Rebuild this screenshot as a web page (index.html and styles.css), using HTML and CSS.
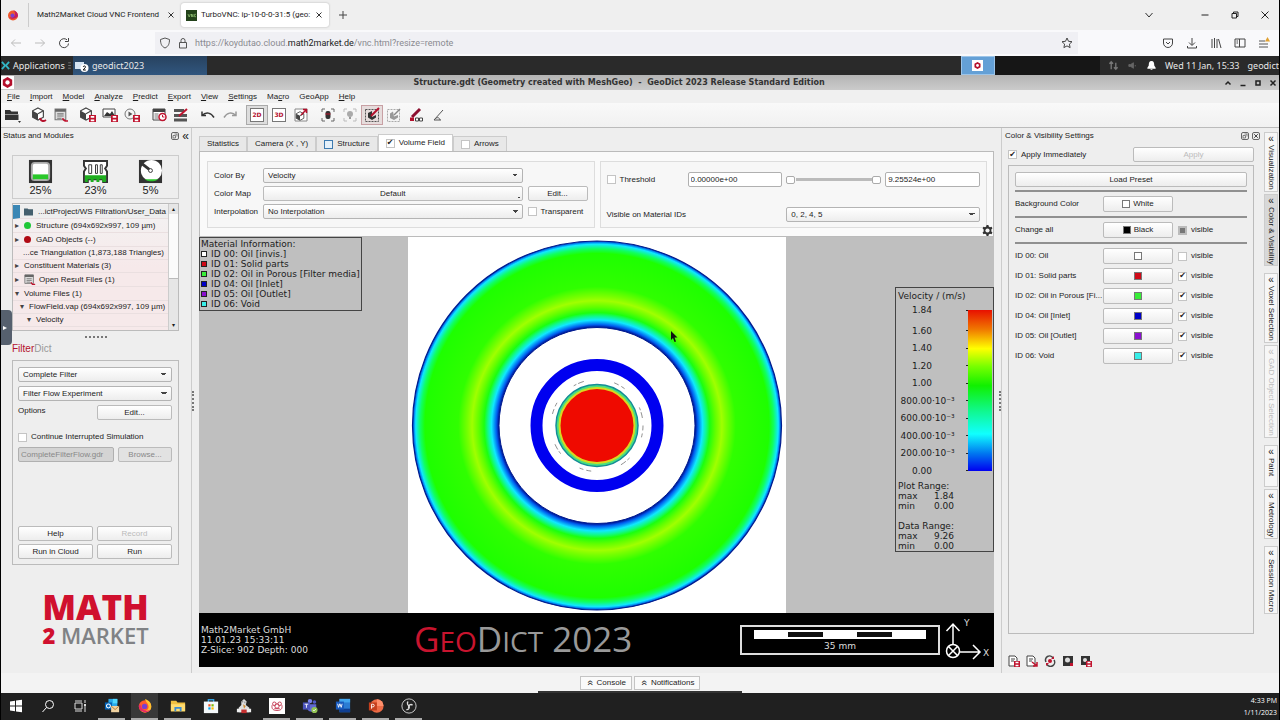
FILE: index.html
```
<!DOCTYPE html>
<html lang="en">
  <head>
    <meta charset="UTF-8" />
    <title>TurboVNC: geodict2023</title>
    <link rel="stylesheet" href="styles.css">
  </head>
  <body>
    <!-- shared icons -->
    <svg class="sprite" aria-hidden="true">
      <symbol id="gear" viewBox="0 0 12 12">
        <path d="M5 0h2l.4 1.7 1.3.7 1.7-.6 1 1.8L10.200 5v2l1.200 1.300-1 1.800-1.700-.5-1.300.7L7 12H5l-.4-1.700-1.300-.7-1.700.5-1-1.800L1.800 7V5L.6 3.600l1-1.800 1.700.6 1.300-.7z" fill="#333" />
        <circle cx="6" cy="6" r="2.300" fill="#f4f4f4" />
      </symbol>
      <symbol id="geo" viewBox="0 0 12 12">
        <path d="M6 0l5.200 3v6L6 12 .8 9V3z" fill="#b4102c" />
        <circle cx="6" cy="6" r="2.400" fill="#fff" />
      </symbol>
      <symbol id="cube" viewBox="0 0 12 12">
        <path d="M6 .8l4.600 2.500v5.400L6 11.200 1.400 8.700V3.300z" fill="#fff" stroke="#444" />
        <path d="M1.400 3.300L6 5.800v5.400L1.400 8.700z" fill="#444" />
        <path d="M6 5.800l4.600-2.500" stroke="#444" />
      </symbol>
      <symbol id="save" viewBox="0 0 8 8">
        <path d="M0 0h8v8H0z" fill="#c0142f" />
        <path d="M2 1h4v2H2zM2 5h4v2H2z" fill="#fff" />
      </symbol>
      <symbol id="undock" viewBox="0 0 8 8">
        <rect x=".5" y=".5" width="7" height="7" rx="1.500" fill="none" stroke="#666" />
        <path d="M2 6V3.500h2.500V6zM3.500 2H6v2.500" fill="none" stroke="#666" stroke-width=".8" />
      </symbol>
      <symbol id="close" viewBox="0 0 8 8">
        <rect x=".5" y=".5" width="7" height="7" rx="1.500" fill="none" stroke="#666" />
        <path d="M2.200 2.200l3.600 3.600M5.800 2.200L2.200 5.800" stroke="#444" />
      </symbol>
      <symbol id="result" viewBox="0 0 14 14">
        <path d="M1 1h10v10H1z" fill="#ddd" stroke="#777" />
        <path d="M1 1h10v2.500H1z" fill="#666" />
        <path d="M3 5.500h6M3 7.500h6M3 9.500h4" stroke="#777" />
        <path d="M8 9.500c1 2.500 2.500 3 5 2.500" fill="none" stroke="#c0142f" stroke-width="1.500" />
      </symbol>
    </svg>

    <header class="browser">
      <div class="tab-strip">
        <svg class="fox" viewBox="0 0 12 12"><circle cx="6" cy="6.500" r="5" fill="#f0582c" /><path d="M6 1c3 1 5 3 5 6-2 3-7 4-9 1 3 1 6 0 6-3S7 2 6 1z" fill="#c31c62" /><circle cx="5.500" cy="6.500" r="2" fill="#7a3fd0" /></svg>
        <div class="browser-tab">
          <span>Math2Market Cloud VNC Frontend</span>
          <button aria-label="Close tab"><svg viewBox="0 0 8 8"><path d="M1.500 1.500l5 5M6.500 1.500l-5 5" stroke="#333" /></svg></button>
        </div>
        <div class="browser-tab current">
          <svg viewBox="0 0 11 11"><path d="M0 0h11v11H0z" fill="#23421a" /><path d="M2 4l1.200 3L4.400 4M5.500 7V4l1.500 3V4M10 4.300H8.600v2.400H10" fill="none" stroke="#9acb7a" stroke-width=".7" /></svg>
          <span>TurboVNC: ip-10-0-0-31:5 (geo:</span>
          <button aria-label="Close tab"><svg viewBox="0 0 8 8"><path d="M1.500 1.500l5 5M6.500 1.500l-5 5" stroke="#333" /></svg></button>
        </div>
        <button class="new-tab" aria-label="New tab"><svg viewBox="0 0 10 10"><path d="M5 1v8M1 5h8" stroke="#444" /></svg></button>
        <div class="window-buttons">
          <button aria-label="List tabs"><svg viewBox="0 0 10 10"><path d="M1.500 3l3.500 4 3.500-4" fill="none" stroke="#333" /></svg></button>
          <button aria-label="Minimize"><svg viewBox="0 0 10 10"><path d="M1.500 5h7" stroke="#222" /></svg></button>
          <button aria-label="Restore"><svg viewBox="0 0 10 10"><path d="M2 3.500h4.500V8H2zM3.500 3.500V2H8v4.500H6.500" fill="none" stroke="#222" /></svg></button>
          <button aria-label="Close"><svg viewBox="0 0 10 10"><path d="M1.500 1.500l7 7M8.500 1.500l-7 7" stroke="#222" /></svg></button>
        </div>
      </div>
      <div class="nav-bar">
        <div class="nav-buttons">
          <button aria-label="Back"><svg viewBox="0 0 12 12"><path d="M11 6H1.500M5 2.500L1.500 6 5 9.500" fill="none" stroke="#bbb" /></svg></button>
          <button aria-label="Forward"><svg viewBox="0 0 12 12"><path d="M1 6h9.500M7 2.500L10.500 6 7 9.500" fill="none" stroke="#bbb" /></svg></button>
          <button aria-label="Reload"><svg viewBox="0 0 12 12"><path d="M10.500 6.500A4.500 4.500 0 1 1 9 2.800M10.500 1v3.500H7" fill="none" stroke="#444" /></svg></button>
        </div>
        <div class="url-bar">
          <svg viewBox="0 0 12 12"><path d="M6 1l4.500 1.500c0 4-1 7-4.500 8.500C2.500 9.500 1.500 6.500 1.500 2.500z" fill="none" stroke="#555" /></svg>
          <svg viewBox="0 0 12 12"><path d="M2.500 5.500h7v5.500h-7zM4 5.500v-2a2 2 0 0 1 4 0v2" fill="none" stroke="#555" /></svg>
          <span class="url">https://koydutao.cloud.<b>math2market.de</b>/vnc.html?resize=remote</span>
          <svg viewBox="0 0 12 12"><path d="M6 1l1.500 3.300 3.500.4-2.600 2.400.7 3.500L6 8.900l-3.100 1.700.7-3.500L1 4.700l3.500-.4z" fill="none" stroke="#444" /></svg>
        </div>
        <div class="nav-tools">
          <button aria-label="Pocket"><svg viewBox="0 0 12 12"><path d="M1.500 2h9v4a4.500 4.500 0 0 1-9 0zM4 5l2 2 2-2" fill="none" stroke="#444" /></svg></button>
          <button aria-label="Downloads"><svg viewBox="0 0 12 12"><path d="M6 1v7M3 5.500L6 8.500l3-3M1.500 9v2h9V9" fill="none" stroke="#444" /></svg></button>
          <button aria-label="Library"><svg viewBox="0 0 12 12"><path d="M2 2v9M4.500 1v10M7 2v9M8.500 2l2.500 9" stroke="#444" /></svg></button>
          <button aria-label="Sidebar"><svg viewBox="0 0 12 12"><path d="M1 2h10v8H1zM5.500 2v8M2.500 4h1.500M2.500 6h1.500" fill="none" stroke="#444" /></svg></button>
          <button aria-label="Menu"><svg viewBox="0 0 12 12"><path d="M1 4h6M1 7h9M1 10h9" stroke="#555" /><path d="M9.500 0l2.500 4.500H7z" fill="#e0a030" /></svg></button>
        </div>
      </div>
    </header>

    <div class="desktop-panel">
      <button class="apps">
        <svg viewBox="0 0 10 10"><path d="M1 1l3.500 4L1 9M9 1L5.500 5 9 9" fill="none" stroke="#32b8c8" stroke-width="2" /></svg>
        Applications
        <svg class="dots" viewBox="0 0 4 10"><path d="M0 2h3M0 5h3M0 8h3" stroke="#777" /></svg>
      </button>
      <button class="task">
        <svg viewBox="0 0 14 14"><path d="M0 3h9v7H0z" fill="#d5e4f2" /><circle cx="9.500" cy="9" r="4" fill="#fff" /><path d="M8.200 8c.2-1.500 2.600-1.300 2.300.2L8.200 11h2.600" fill="none" stroke="#111" /></svg>
        geodict2023
      </button>
      <div class="workspaces"><span class="workspace"><svg viewBox="0 0 11 11"><path d="M0 0h11v11H0z" fill="#fff" /><use href="#geo" x="2" y="2" width="7" height="7" /></svg></span></div>
      <div class="tray">
        <svg viewBox="0 0 12 12"><path d="M3.500 10V2M1.500 4l2-2 2 2M8.500 3v7M6.500 8l2 2 2-2" fill="none" stroke="#777" stroke-width="1.500" /></svg>
        <svg viewBox="0 0 12 12"><path d="M2 5h2l3-2v6L4 7H2zM9 5.500v1.500" fill="#666" stroke="#666" /></svg>
        <svg viewBox="0 0 12 12"><path d="M6 1c2.500 0 3 2 3 5l1.500 2.500v1h-9v-1L3 6c0-3 .5-5 3-5zM5 10h2v1H5z" fill="#fff" /></svg>
        <span>Wed 11 Jan, 15:33</span>
        <span>geodict</span>
      </div>
    </div>

    <div class="app">
      <div class="title-bar">
        <svg viewBox="0 0 12 12"><path d="M0 0h12v12H0z" fill="#fff" /><use href="#geo" x="1" y="1" width="10" height="10" /></svg>
        <h1>Structure.gdt (Geometry created with MeshGeo)&nbsp; -&nbsp; GeoDict 2023 Release Standard Edition</h1>
        <div class="title-buttons">
          <svg viewBox="0 0 8 8"><path d="M1.500 5.500L4 3l2.500 2.500" fill="none" stroke="#222" stroke-width="1.500" /></svg>
          <svg viewBox="0 0 8 8"><path d="M1.500 6.500h5" stroke="#222" stroke-width="1.500" /></svg>
          <svg viewBox="0 0 8 8"><path d="M2 2h4v4H2z" fill="none" stroke="#222" stroke-width="1.500" /></svg>
          <svg viewBox="0 0 8 8"><path d="M1.500 1.500l5 5M6.500 1.500l-5 5" stroke="#222" stroke-width="1.500" /></svg>
        </div>
      </div>

      <nav class="menu-bar">
        <button><u>F</u>ile</button>
        <button><u>I</u>mport</button>
        <button><u>M</u>odel</button>
        <button><u>A</u>nalyze</button>
        <button><u>P</u>redict</button>
        <button><u>E</u>xport</button>
        <button><u>V</u>iew</button>
        <button><u>S</u>ettings</button>
        <button>Ma<u>c</u>ro</button>
        <button>GeoApp</button>
        <button><u>H</u>elp</button>
      </nav>

      <div class="toolbar">
        <div class="tools">
          <button aria-label="Open folder"><svg viewBox="0 0 18 16"><path d="M2 3h5l1.500 1.500H15V7H2z" fill="#333" /><path d="M2 7.500h13.500V13H2z" fill="#333" /><path d="M15 14h3l-1.500 2z" fill="#333" /></svg></button>
        </div>
        <div class="tools">
          <button aria-label="Load structure"><svg viewBox="0 0 18 16"><use href="#cube" x="1" y="0" width="14" height="14" /><path d="M10 11c1 3 3 4 6 2" fill="none" stroke="#b4102c" stroke-width="2" /></svg></button>
          <button aria-label="Load results"><svg viewBox="0 0 18 16"><use href="#result" x="2" y="1" width="15" height="15" /></svg></button>
        </div>
        <div class="tools">
          <button aria-label="Save structure"><svg viewBox="0 0 18 16"><use href="#cube" x="0" y="0" width="14" height="14" /><use href="#save" x="10" y="8" width="7" height="7" /></svg></button>
          <button aria-label="Save image"><svg viewBox="0 0 18 16"><path d="M2 2h12v8H2z" fill="#fff" stroke="#444" /><path d="M3 9l3-4 3 2 2-3 3 5z" fill="#333" /><use href="#save" x="10" y="8" width="7" height="7" /></svg></button>
          <button aria-label="Save video"><svg viewBox="0 0 18 16"><circle cx="7" cy="7" r="5" fill="none" stroke="#777" /><path d="M5.500 4.500v5l4-2.500z" fill="#555" /><use href="#save" x="10" y="8" width="7" height="7" /></svg></button>
        </div>
        <div class="tools">
          <button aria-label="Macro timer"><svg viewBox="0 0 18 16"><path d="M3 2h12v11H3z" fill="#fff" stroke="#444" /><path d="M3 2h12v3H3z" fill="#444" /><path d="M4.500 7h4M4.500 9h4M4.500 11h4" stroke="#777" /><circle cx="12.500" cy="10" r="3.500" fill="#fff" stroke="#c0142f" stroke-width="1.500" /><path d="M12.500 8v2h2" fill="none" stroke="#c0142f" /></svg></button>
          <button aria-label="Edit macro"><svg viewBox="0 0 18 16"><path d="M2 2h10v3H2zM2 7h13v3H2zM2 11.500h13v3H2z" fill="#555" /><path d="M7 9l8-7" stroke="#c0142f" stroke-width="2" /></svg></button>
        </div>
        <div class="tools">
          <button aria-label="Undo"><svg viewBox="0 0 18 16"><path d="M3 8.500c4-4 9-3 12 2M3 4.500v4h4" fill="none" stroke="#333" stroke-width="1.500" /></svg></button>
          <button aria-label="Redo"><svg viewBox="0 0 18 16"><path d="M15 8.500c-4-4-9-3-12 2M15 4.500v4h-4" fill="none" stroke="#999" stroke-width="1.500" /></svg></button>
        </div>
        <div class="tools">
          <button class="on mode"><span>2D</span></button>
          <button class="mode"><span>3D</span></button>
          <button aria-label="Resize view"><svg viewBox="0 0 18 16"><path d="M3 2h12v12H3z" fill="#fff" stroke="#888" /><use href="#cube" x="3" y="4" width="10" height="10" /><path d="M9 8l5-5M11 2.500h3.500V6" fill="none" stroke="#b4102c" stroke-width="1.500" /></svg></button>
        </div>
        <div class="tools">
          <button aria-label="Mouse mode"><svg viewBox="0 0 18 16"><path d="M3 5V2h3M12 2h3v3M15 11v3h-3M6 14H3v-3" fill="none" stroke="#666" /><rect x="6.500" y="4" width="5" height="8" rx="2" fill="#333" /><path d="M6.500 7h5" stroke="#c0142f" /></svg></button>
          <button aria-label="Light mode"><svg viewBox="0 0 18 16"><path d="M3 5V2h3M12 2h3v3M15 11v3h-3M6 14H3v-3" fill="none" stroke="#bbb" /><circle cx="9" cy="7" r="3" fill="#aaa" /><path d="M8 10h2v2H8z" fill="#999" /></svg></button>
          <button class="on rosy" aria-label="Draw selection"><svg viewBox="0 0 18 16"><path d="M2.500 2.500h13v12h-13z" fill="none" stroke="#555" stroke-dasharray="2 1" /><path d="M9 4l-4 2v4.500L9 13l4-2.500V8L9 10z" fill="#333" /><path d="M8 9l8-8" stroke="#b4102c" stroke-width="2" /></svg></button>
          <button aria-label="Draw selection off"><svg viewBox="0 0 18 16"><path d="M2.500 2.500h12v12h-12z" fill="none" stroke="#aaa" stroke-dasharray="2 1" /><path d="M8 4.500L5 6.500V11l4 2 4-2.500V8L9 9.500z" fill="#999" /><path d="M9 8l6-6" stroke="#888" stroke-width="1.500" /></svg></button>
          <button aria-label="Paint tool"><svg viewBox="0 0 18 16"><path d="M5 10l8-8" stroke="#8c1030" stroke-width="3" /><path d="M3 10.500h4V14H3z" fill="#b4102c" /><path d="M8.500 11h3v3h-3zM12.500 11h3v3h-3z" fill="#fff" stroke="#444" /></svg></button>
          <button aria-label="Measure angle"><svg viewBox="0 0 18 16"><path d="M5 13L14 3M5 13h7M6.500 11.500c2-1.500 4-1 4.500 1.500" fill="none" stroke="#555" /></svg></button>
        </div>
      </div>

      <main class="workspace-area">
        <aside class="left-dock">
          <button class="vnc-handle" aria-label="Open VNC bar"><svg viewBox="0 0 6 6"><path d="M1 1l4 2-4 2z" fill="#fff" /></svg></button>
          <div class="dock-header">
            <h2>Status and Modules</h2>
            <svg><use href="#undock" /></svg>
            <span class="collapse">«</span>
          </div>
          <div class="status">
            <div class="stat">
              <svg viewBox="0 0 26 26"><path d="M1 1h24v24H1z" fill="#333" /><rect x="4" y="4" width="18" height="18" rx="3" fill="#fff" stroke="#aaa" stroke-width="2" /><path d="M5 16h16v5H5z" fill="#2ac82a" /></svg>
              <span>25%</span>
            </div>
            <div class="stat">
              <svg viewBox="0 0 26 26"><path d="M1 2h24v5l-2 3 2 3v11h-4v-3H5v3H1V13l2-3-2-3z" fill="#fff" stroke="#333" stroke-width="2" /><path d="M2 17h22v7h-4v-3h-3v3h-3v-3h-3v3H8v-3H5v3H2z" fill="#1fae1f" /><path d="M6 6h3v9H6zM13 6h2v9h-2zM18 6h2v9h-2z" fill="#fff" stroke="#333" /></svg>
              <span>23%</span>
            </div>
            <div class="stat">
              <svg viewBox="0 0 26 26"><path d="M1 1h24v24H1z" fill="#333" /><circle cx="14" cy="12" r="11" fill="#fff" /><path d="M7 21c4 3 10 3 14 0z" fill="#2ac82a" /><path d="M3 4l9 7" stroke="#333" stroke-width="3" /><circle cx="13" cy="12" r="2" fill="#fff" stroke="#333" /></svg>
              <span>5%</span>
            </div>
          </div>
          <div class="tree">
            <ul>
              <li class="tall root"><svg viewBox="0 0 10 8"><path d="M0 0h4l1 1h5v7H0z" fill="#44606e" /></svg>...ictProject/WS Filtration/User_Data</li>
              <li class="tall closed"><i class="dot dot-green"></i>Structure (694x692x997, 109 µm)</li>
              <li class="tall closed"><i class="dot dot-red"></i>GAD Objects (--)</li>
              <li class="plain">...ce Triangulation (1,873,188 Triangles)</li>
              <li class="closed">Constituent Materials (3)</li>
              <li class="tall closed"><svg viewBox="0 0 14 14"><use href="#result" width="14" height="14" /></svg>Open Result Files (1)</li>
              <li class="tall open">Volume Files (1)</li>
              <li class="open level-1">FlowField.vap (694x692x997, 109 µm)</li>
              <li class="open level-2">Velocity</li>
            </ul>
            <div class="scrollbar"><span>▴</span><span class="thumb"></span><span>▾</span></div>
          </div>
          <div class="splitter"></div>

          <h2 class="module-name"><b>Filter</b>Dict</h2>
          <form class="module">
            <select aria-label="Filter type"><option>Complete Filter</option></select>
            <select aria-label="Experiment"><option>Filter Flow Experiment</option></select>
            <div class="pair">
              <span>Options</span>
              <button type="button">Edit...</button>
            </div>
            <label class="check"><input type="checkbox">Continue Interrupted Simulation</label>
            <div class="file">
              <input type="text" value="CompleteFilterFlow.gdr" aria-label="Result file" disabled>
              <button type="button" class="muted" disabled>Browse...</button>
            </div>
            <div class="pair actions">
              <button type="button">Help</button>
              <button type="button" disabled>Record</button>
              <button type="button">Run in Cloud</button>
              <button type="button">Run</button>
            </div>
          </form>
          <div class="logo">
            <strong>MATH</strong>
            <span><b>2</b> MARKET</span>
          </div>
        </aside>
        <div class="grip"></div>

        <section class="center">
          <div class="view-tabs">
            <button>Statistics</button>
            <button>Camera (X , Y)</button>
            <label><input type="checkbox" class="blue">Structure</label>
            <label class="current"><input type="checkbox" checked>Volume Field</label>
            <label><input type="checkbox">Arrows</label>
          </div>
          <div class="tab-page">
            <fieldset class="coloring">
              <label for="color-by">Color By</label>
              <select id="color-by"><option>Velocity</option></select>
              <span></span>
              <label for="color-map">Color Map</label>
              <button id="color-map" class="map-button">Default</button>
              <button>Edit...</button>
              <label for="interpolation">Interpolation</label>
              <select id="interpolation"><option>No Interpolation</option></select>
              <label class="check"><input type="checkbox">Transparent</label>
            </fieldset>
            <fieldset class="threshold">
              <label class="check"><input type="checkbox">Threshold</label>
              <input type="text" value="0.00000e+00" aria-label="Minimum">
              <div class="range">
                <input type="range" value="0" aria-label="Lower threshold">
                <input type="range" value="100" aria-label="Upper threshold">
              </div>
              <input type="text" value="9.25524e+00" aria-label="Maximum">
              <label for="material-ids" class="ids-label">Visible on Material IDs</label>
              <select id="material-ids"><option>0, 2, 4, 5</option></select>
            </fieldset>
            <button class="gear" aria-label="View settings"><svg><use href="#gear" /></svg></button>
          </div>

          <div class="viewer">
            <svg class="slice" viewBox="0 0 378 376">
              <defs>
                <radialGradient id="flow" gradientUnits="userSpaceOnUse" cx="189" cy="188.500" r="185">
                  <stop offset=".53" stop-color="#001090" />
                  <stop offset=".545" stop-color="#0060f0" />
                  <stop offset=".57" stop-color="#10e8ff" />
                  <stop offset=".59" stop-color="#10f890" />
                  <stop offset=".61" stop-color="#1cff10" />
                  <stop offset=".64" stop-color="#60ff00" />
                  <stop offset=".675" stop-color="#a0ff00" />
                  <stop offset=".7" stop-color="#78ff00" />
                  <stop offset=".75" stop-color="#30ff00" />
                  <stop offset=".93" stop-color="#1eff00" />
                  <stop offset=".955" stop-color="#10ff60" />
                  <stop offset=".98" stop-color="#10e8ff" />
                  <stop offset=".99" stop-color="#0080f0" />
                  <stop offset="1" stop-color="#001480" />
                </radialGradient>
              </defs>
              <rect width="378" height="376" fill="#fff" />
              <circle cx="189" cy="188.500" r="184.500" fill="url(#flow)" stroke="#001c90" stroke-width="1.200" />
              <circle cx="189" cy="188.500" r="98" fill="#fff" stroke="#001c90" />
              <circle cx="189" cy="188.500" r="60.500" fill="none" stroke="#0000f0" stroke-width="12" />
              <circle cx="189" cy="188.500" r="46" fill="none" stroke="#444" stroke-width=".6" stroke-dasharray="5 3 4 24 3 2 6 31" />
              <circle cx="189" cy="188.500" r="41" fill="#48e080" stroke="#148c98" stroke-width="1.500" />
              <circle cx="189" cy="188.500" r="37.500" fill="#ef0a00" stroke="#d8d820" stroke-width="2" />
              <path d="M263 94v9l2-2 1.500 4 1.500-.6-1.500-3.800h3z" fill="#111" />
            </svg>
            <div class="materials">
              <p>Material Information:</p>
              <ul>
                <li><i class="swatch white"></i>ID 00: Oil [invis.]</li>
                <li><i class="swatch red"></i>ID 01: Solid parts</li>
                <li><i class="swatch green"></i>ID 02: Oil in Porous [Filter media]</li>
                <li><i class="swatch blue"></i>ID 04: Oil [Inlet]</li>
                <li><i class="swatch purple"></i>ID 05: Oil [Outlet]</li>
                <li><i class="swatch cyan"></i>ID 06: Void</li>
              </ul>
            </div>
            <div class="velocity">
              <p>Velocity / (m/s)</p>
              <div class="scale">
                <ul>
                  <li><span>1.84</span></li>
                  <li><span>1.60</span></li>
                  <li><span>1.40</span></li>
                  <li><span>1.20</span></li>
                  <li><span>1.00</span></li>
                  <li><span>800.00</span>·10⁻³</li>
                  <li><span>600.00</span>·10⁻³</li>
                  <li><span>400.00</span>·10⁻³</li>
                  <li><span>200.00</span>·10⁻³</li>
                  <li><span>0.00</span></li>
                </ul>
                <div class="color-bar"></div>
              </div>
              <dl>
                <dt>Plot Range:</dt>
                <dd><span>max</span><span>1.84</span></dd>
                <dd><span>min</span><span>0.00</span></dd>
              </dl>
              <dl>
                <dt>Data Range:</dt>
                <dd><span>max</span><span>9.26</span></dd>
                <dd><span>min</span><span>0.00</span></dd>
              </dl>
            </div>
          </div>

          <div class="viewer-footer">
            <p>Math2Market GmbH<br>11.01.23 15:33:11<br>Z-Slice: 902 Depth: 000</p>
            <div class="brand"><b>G<small>EO</small></b>D<small>ICT</small> 2023</div>
            <div class="ruler">
              <div class="ruler-bar"><i></i><i></i><i></i><i></i><i></i></div>
              35 mm
            </div>
            <svg class="axes" viewBox="0 0 48 46">
              <g fill="none" stroke="#fff" stroke-width="1.500">
                <circle cx="9" cy="34" r="6.500" />
                <path d="M4.500 29.500l9 9M13.500 29.500l-9 9M9 27V7M2.500 14L9 7l6.500 7M16 35h20M29 28l7 7-7 7" />
              </g>
              <text x="20" y="9">Y</text>
              <text x="39" y="39">X</text>
            </svg>
          </div>
        </section>
        <div class="grip grip-right"></div>

        <aside class="right-dock">
          <div class="dock-header">
            <h2>Color &amp; Visibility Settings</h2>
            <svg><use href="#undock" /></svg>
            <svg><use href="#close" /></svg>
          </div>
          <div class="apply">
            <label class="check"><input type="checkbox" checked>Apply Immediately</label>
            <button disabled>Apply</button>
          </div>
          <div class="colors">
            <button class="preset">Load Preset</button>
            <div class="color-row ruled">
              <span>Background Color</span>
              <button><i class="swatch white"></i>White</button>
            </div>
            <div class="color-row ruled">
              <span>Change all</span>
              <button><i class="swatch black"></i>Black</button>
              <label class="check"><input type="checkbox" class="partial">visible</label>
            </div>
            <div class="materials-list">
              <div class="color-row"><span>ID 00: Oil</span><button aria-label="Color of ID 00"><i class="swatch white"></i></button><label class="check"><input type="checkbox">visible</label></div>
              <div class="color-row"><span>ID 01: Solid parts</span><button aria-label="Color of ID 01"><i class="swatch red"></i></button><label class="check"><input type="checkbox" checked>visible</label></div>
              <div class="color-row"><span>ID 02: Oil in Porous [Fi...</span><button aria-label="Color of ID 02"><i class="swatch green"></i></button><label class="check"><input type="checkbox" checked>visible</label></div>
              <div class="color-row"><span>ID 04: Oil [Inlet]</span><button aria-label="Color of ID 04"><i class="swatch blue"></i></button><label class="check"><input type="checkbox" checked>visible</label></div>
              <div class="color-row"><span>ID 05: Oil [Outlet]</span><button aria-label="Color of ID 05"><i class="swatch purple"></i></button><label class="check"><input type="checkbox" checked>visible</label></div>
              <div class="color-row"><span>ID 06: Void</span><button aria-label="Color of ID 06"><i class="swatch cyan"></i></button><label class="check"><input type="checkbox" checked>visible</label></div>
            </div>
          </div>
          <div class="dock-tools">
            <button aria-label="Save preset"><svg viewBox="0 0 12 12"><path d="M1 1h6l2 2v8H1z" fill="#fff" stroke="#444" /><path d="M3 4h4M3 6h3" stroke="#444" /><use href="#save" x="6" y="6" width="6" height="6" /></svg></button>
            <button aria-label="Load preset file"><svg viewBox="0 0 12 12"><path d="M1 1h6l2 2v8H1z" fill="#fff" stroke="#444" /><path d="M3 4h4M3 6h3" stroke="#444" /><path d="M6 7l5 4M11 7v4H7" fill="none" stroke="#c0142f" stroke-width="1.500" /></svg></button>
            <button aria-label="Reset"><svg viewBox="0 0 12 12"><path d="M2 7a4 4 0 0 1 7-4M10 5a4 4 0 0 1-7 4.500" fill="none" stroke="#444" stroke-width="1.500" /><circle cx="6" cy="6" r="2" fill="#c0142f" /><path d="M10 1v3H7zM2 11V8h3z" fill="#c0142f" /></svg></button>
            <button aria-label="Snapshot"><svg viewBox="0 0 12 12"><path d="M1 1h10v10H1z" fill="#333" /><circle cx="5.500" cy="5" r="2.500" fill="#ddd" /><path d="M8 8h3v3H8z" fill="#c0142f" /></svg></button>
            <button aria-label="Save snapshot"><svg viewBox="0 0 12 12"><path d="M1 1h9v9H1z" fill="#333" /><circle cx="5" cy="5" r="2" fill="#ddd" /><use href="#save" x="6" y="6" width="6" height="6" /></svg></button>
          </div>
        </aside>

        <nav class="side-tabs">
          <button><i>«</i>Visualization</button>
          <button class="current"><i>«</i>Color &amp; Visibility</button>
          <button class="apart"><i>«</i>Voxel Selection</button>
          <button disabled><i>«</i>GAD Object Selection</button>
          <button class="apart"><i>«</i>Paint</button>
          <button><i>«</i>Metrology</button>
          <button class="apart"><i>«</i>Session Macro</button>
        </nav>
      </main>

      <div class="bottom-bar">
        <button><i>«</i>Console</button>
        <button><i>«</i>Notifications</button>
        <div class="share-strip"></div>
      </div>
    </div>

    <footer class="taskbar">
      <button aria-label="Start"><svg viewBox="0 0 16 16"><path d="M2 3.500l5-.7v4.700H2zM8 2.600l6-.8v5.700H8zM2 8.500h5v4.700l-5-.7zM8 8.500h6v5.700l-6-.8z" fill="#fff" /></svg></button>
      <button aria-label="Search"><svg viewBox="0 0 16 16"><circle cx="9.500" cy="6.500" r="4" fill="none" stroke="#fff" /><path d="M6.500 9.500L2.500 14" stroke="#fff" /></svg></button>
      <button aria-label="Task view"><svg viewBox="0 0 16 16"><path d="M3 5h7v6H3zM3 3h7M3 13h7M13 2v3M13 8v6" fill="none" stroke="#ddd" /><path d="M12 6h2v2h-2z" fill="#ddd" /></svg></button>
      <button class="running" aria-label="Outlook"><svg viewBox="0 0 18 18"><path d="M5 1h10v11H5z" fill="#28a8ea" /><path d="M10 1h5v5h-5z" fill="#50d9ff" /><path d="M1 5h8v8H1z" fill="#0364b8" /><circle cx="5" cy="9" r="2.200" fill="none" stroke="#fff" stroke-width="1.200" /><path d="M8 9h9v7H8z" fill="#f0d2a0" /><path d="M8 9l4.500 4L17 9" fill="none" stroke="#b07a30" /></svg></button>
      <button class="running active" aria-label="Firefox"><svg viewBox="0 0 18 18"><circle cx="9" cy="9.500" r="7" fill="#ff5a2c" /><path d="M9 1c4 1 8 5 7 10-1 5-8 7-12 3 4 2 9 0 9-4s-3-5-4-9z" fill="#ffc22e" /><path d="M2 8c0 5 3 8 7 8 3 0 5-1 6-3-5 3-10 1-11-5z" fill="#e8286a" /><circle cx="8.500" cy="9.500" r="3" fill="#7a3fd0" /></svg></button>
      <button class="running" aria-label="File Explorer"><svg viewBox="0 0 18 18"><path d="M1 3h6l1.500 2H17v10H1z" fill="#f0c040" /><path d="M1 7h16v8H1z" fill="#ffdc70" /><path d="M5 10h8v5h-2v-3H7v3H5z" fill="#3c8cd0" /></svg></button>
      <button aria-label="Store"><svg viewBox="0 0 18 18"><path d="M6 5V2h6v3" fill="none" stroke="#32a0e0" stroke-width="1.500" /><path d="M1 4h16v13H1z" fill="#f4f8fa" /><path d="M6 7h2.500v2.500H6z" fill="#f25022" /><path d="M9.500 7H12v2.500H9.500z" fill="#7fba00" /><path d="M6 10.500h2.500V13H6z" fill="#00a4ef" /><path d="M9.500 10.500H12V13H9.500z" fill="#ffb900" /></svg></button>
      <button aria-label="Tools"><svg viewBox="0 0 18 18"><path d="M9 1l3 3-1 4 4 3v5H3v-5l3-3V4z" fill="#ddd" /><path d="M8 7l3 2-2 3z" fill="#d08a30" /><path d="M1 12h5v4H1zM12 12h5v4h-5z" fill="#eee" /><path d="M6 13h6v4H6z" fill="#c43030" /><path d="M7.500 3v2M10 4v2" stroke="#777" /></svg></button>
      <button class="running" aria-label="GeoDict"><svg viewBox="0 0 18 18"><path d="M0 0h18v18H0z" fill="#fff" /><g fill="none" stroke="#c0304a"><circle cx="6" cy="6.500" r="2" /><circle cx="12" cy="6.500" r="2" /><circle cx="9" cy="9" r="2.500" /><path d="M3.500 8c-1 5 2 6 5.500 6s6.500-1 5.500-6M6 12h6" /></g></svg></button>
      <button class="running" aria-label="Teams"><svg viewBox="0 0 18 18"><circle cx="9" cy="3.500" r="2.500" fill="#7b83eb" /><circle cx="14" cy="4.500" r="2" fill="#5059c9" /><path d="M6 7h10v5c0 4-9 5-10 0z" fill="#6068d0" /><path d="M1 5h8v8H1z" fill="#4b53bc" /><path d="M3 7h4M5 7v4" stroke="#fff" /><circle cx="14" cy="13.500" r="3.500" fill="#92c353" /><path d="M12.500 13.500l1 1 2-2" fill="none" stroke="#fff" /></svg></button>
      <button class="running" aria-label="Word"><svg viewBox="0 0 18 18"><path d="M5 1h12v15H5z" fill="#2b7cd3" /><path d="M5 1h12v4H5z" fill="#41a5ee" /><path d="M5 12h12v4H5z" fill="#103f91" /><path d="M1 4h9v9H1z" fill="#185abd" /><path d="M3 6.500l1 4 1.500-4 1.500 4 1-4" fill="none" stroke="#fff" /></svg></button>
      <button class="running" aria-label="PowerPoint"><svg viewBox="0 0 18 18"><circle cx="10" cy="9" r="7.500" fill="#ed6c47" /><path d="M10 1.500A7.500 7.500 0 0 1 17.500 9H10z" fill="#ff8f6b" /><path d="M1 5h9v9H1z" fill="#c43e1c" /><path d="M4 12V7h1.500a1.500 1.500 0 0 1 0 3H4" fill="none" stroke="#fff" /></svg></button>
      <button class="running" aria-label="OBS"><svg viewBox="0 0 18 18"><circle cx="9" cy="9" r="8" fill="#222" stroke="#ddd" /><path d="M8 4c-2 2 0 5 2 5M13 8c-2-1.500-5 0-4.500 3M6 13c2.500.5 4-2 3-4" fill="none" stroke="#ddd" stroke-width="1.500" /></svg></button>
      <div class="clock">4:33 PM<br>1/11/2023</div>
    </footer>
  </body>
</html>
```
FILE: styles.css
```
* {
  box-sizing: border-box;
}
html {
  height: 100%;
}
body {
  margin: 0;
  height: 100%;
  display: flex;
  flex-direction: column;
  overflow: hidden;
  border-left: 1px solid #000;
  border-right: 1px solid #000;
  font-family: "Liberation Sans", Arial, sans-serif;
  font-size: 8px;
  line-height: 12px;
  color: #1c1c1c;
  background: #eee;
}
h1, h2, p, ul, dl, dd {
  margin: 0;
  padding: 0;
  font-size: inherit;
  font-weight: normal;
  list-style: none;
}
i {
  font-style: normal;
}
svg {
  display: block;
  flex: none;
}
button, select, input {
  font: inherit;
  color: inherit;
  margin: 0;
}
button {
  padding: 0;
  border: 0;
  background: none;
  white-space: nowrap;
}
.sprite {
  position: absolute;
  width: 0;
  height: 0;
}

/* browser */
.browser {
  font-family: Roboto, sans-serif;
  background: #f9f9fb;
}
.tab-strip {
  display: flex;
  align-items: center;
  height: 30px;
  background: #efefef;
}
.fox {
  width: 12px;
  height: 12px;
  margin: 0 9px 0 6px;
}
.browser-tab {
  display: flex;
  align-items: center;
  gap: 4px;
  height: 24px;
  padding: 0 6px 0 8px;
  width: 153px;
  border-left: 1px solid #ccc;
}
.browser-tab span {
  flex: 1;
  white-space: nowrap;
}
.browser-tab svg {
  width: 11px;
  height: 11px;
}
.browser-tab button svg {
  width: 8px;
  height: 8px;
}
.browser-tab.current {
  width: 148px;
  padding-left: 5px;
  border: 0;
  border-radius: 3px;
  background: #fff;
  box-shadow: 0 0 2px #aaa;
}
.new-tab svg, .window-buttons svg {
  width: 10px;
  height: 10px;
}
.new-tab {
  margin-left: 9px;
}
.window-buttons {
  display: flex;
  gap: 20px;
  margin-left: auto;
  padding-right: 9px;
}
.window-buttons button:first-child {
  margin-right: 26px;
}
.nav-bar {
  display: flex;
  align-items: center;
  height: 26px;
}
.nav-bar svg {
  width: 12px;
  height: 12px;
}
.nav-buttons {
  display: flex;
  gap: 12px;
  width: 154px;
  padding-left: 9px;
}
.url-bar {
  display: flex;
  flex: 1;
  align-items: center;
  gap: 6px;
  height: 22px;
  padding: 0 5px 0 4px;
  background: #f0f0f4;
  font-size: 9px;
}
.url {
  flex: 1;
  color: #8a8a90;
}
.url b {
  font-weight: normal;
  color: #222;
}
.nav-tools {
  display: flex;
  gap: 12px;
  padding: 0 9px 0 84px;
}

/* remote desktop panel */
.desktop-panel {
  display: flex;
  height: 19px;
  background: #2a2a2a;
  color: #e8e8e8;
  font-family: "Noto Sans", sans-serif;
  font-size: 9px;
}
.desktop-panel button {
  display: flex;
  align-items: center;
  gap: 3px;
}
.apps {
  width: 72px;
}
.apps svg {
  width: 9px;
  height: 9px;
}
.apps .dots {
  width: 4px;
}
.desktop-panel .task {
  width: 134px;
  padding-left: 2px;
  background: linear-gradient(#27425f, #31567e);
}
.task svg {
  width: 14px;
  height: 14px;
}
.workspaces {
  display: flex;
  width: 139px;
  margin-left: auto;
  background: #161616;
}
.workspace {
  display: flex;
  align-items: center;
  justify-content: center;
  width: 34px;
  border: 1px solid #9cc4e8;
  background: #64a0d6;
}
.workspace svg {
  width: 11px;
  height: 11px;
}
.tray {
  display: flex;
  align-items: center;
  gap: 8px;
  padding-left: 8px;
}
.tray svg {
  width: 11px;
  height: 11px;
}

/* application window */
.app {
  flex: 1;
  display: flex;
  flex-direction: column;
  min-height: 0;
}
.title-bar {
  display: flex;
  align-items: center;
  height: 15px;
  background: linear-gradient(#b4b4b4, #cbcbcb);
}
.title-bar > svg {
  width: 13px;
  height: 13px;
}
.title-bar h1 {
  flex: 1;
  text-align: center;
  font-family: "DejaVu Sans", sans-serif;
  font-weight: bold;
  color: #333;
}
.title-buttons {
  display: flex;
  gap: 7px;
  padding-right: 2px;
}
.title-buttons svg {
  width: 8px;
  height: 8px;
}
.menu-bar {
  display: flex;
  gap: 10px;
  height: 13px;
  padding-left: 6px;
  background: #f0f0f0;
}
.toolbar {
  display: flex;
  align-items: center;
  gap: 5px;
  height: 25px;
  border-bottom: 1px solid #bbb;
  background: linear-gradient(#f9f9f9, #f1f1f1);
}
.tools {
  display: flex;
}
.tools button {
  display: flex;
  align-items: center;
  justify-content: center;
  width: 22px;
  height: 20px;
  border: 1px solid transparent;
}
.tools button.on {
  border-color: #aaa;
  background: #ddd;
}
.tools button.rosy {
  border-color: #c8a0a4;
  background: #e6dcdc;
}
.tools svg {
  width: 18px;
  height: 16px;
}
.mode span {
  border: 1px solid #777;
  padding: 0 1px;
  font-family: "DejaVu Sans", sans-serif;
  font-size: 6px;
  font-weight: bold;
  color: #b4102c;
  background: #fff;
}
.workspace-area {
  flex: 1;
  display: flex;
  min-height: 0;
}

/* form controls */
.left-dock form button, .tab-page fieldset button, .apply button, .colors button {
  display: flex;
  align-items: center;
  justify-content: center;
  height: 15px;
  border: 1px solid #bbb;
  border-radius: 2px;
  background: linear-gradient(#fff, #ededed);
}
button:disabled {
  color: #bbb;
}
select {
  width: 100%;
  height: 15px;
  padding: 0 4px;
  border: 1px solid #b4b4b4;
  border-radius: 2px;
  appearance: none;
  background:
    linear-gradient(45deg, transparent 50%, #444 50%) right 7px center / 3px 3px no-repeat,
    linear-gradient(-45deg, transparent 50%, #444 50%) right 4px center / 3px 3px no-repeat,
    linear-gradient(#fff, #ededed);
}
input[type="text"] {
  min-width: 0;
  width: 100%;
  height: 15px;
  padding: 0 2px;
  border: 1px solid #b0b0b0;
  border-radius: 2px;
  background: #fff;
}
input[type="text"]:disabled {
  color: #888;
  background: #d4d4d4;
}
input[type="checkbox"] {
  display: flex;
  align-items: center;
  justify-content: center;
  flex: none;
  width: 9px;
  height: 9px;
  border: 1px solid #c4c4c4;
  appearance: none;
  background: #fff;
}
input[type="checkbox"]:checked::before {
  content: "✔";
  font: 8px/8px "DejaVu Sans", sans-serif;
}
input[type="checkbox"].blue {
  border-color: #3c7ab0;
  background: #e4f0fa;
}
input[type="checkbox"].partial {
  border: 2px solid #bbb;
  background: #777;
}
.check {
  display: flex;
  align-items: center;
  gap: 4px;
  white-space: nowrap;
}
.dock-header {
  display: flex;
  align-items: center;
  gap: 3px;
  height: 16px;
}
.dock-header h2 {
  flex: 1;
}
.dock-header svg {
  width: 8px;
  height: 8px;
}
.collapse {
  font-size: 12px;
}

/* left dock */
.left-dock {
  position: relative;
  width: 190px;
  padding: 0 12px 0 11px;
}
.left-dock .dock-header {
  margin: 0 -10px 11px -9px;
}
.vnc-handle {
  position: absolute;
  left: 0;
  top: 182px;
  width: 11px;
  height: 35px;
  border-radius: 0 4px 4px 0;
  background: #56606e;
  z-index: 1;
}
.vnc-handle svg {
  width: 6px;
  height: 6px;
  margin-left: 1px;
}
.status {
  display: flex;
  height: 44px;
  border: 1px solid #ccc;
}
.stat {
  flex: 1;
  display: flex;
  flex-direction: column;
  align-items: center;
  padding-top: 3px;
  font-size: 11px;
}
.stat svg {
  width: 25px;
  height: 25px;
}
.tree {
  display: flex;
  margin-top: 4px;
  height: 128px;
  border: 1px solid #bbb;
  background: linear-gradient(#f3f3f3, #f6e9ea 50%);
}
.tree ul {
  flex: 1;
  min-width: 0;
  padding-top: 1px;
}
.tree li {
  display: flex;
  align-items: center;
  height: 13px;
  padding-left: 2px;
  border-bottom: 1px solid #eadfe0;
  white-space: nowrap;
}
.tree li.tall {
  height: 14px;
}
.tree li.root {
  gap: 5px;
  padding: 0 0 0 4px;
  border-left: 7px solid #3a87b5;
  background: #eee;
}
.root svg {
  width: 9px;
  height: 8px;
}
.closed svg {
  width: 12px;
  height: 12px;
  margin-right: 3px;
}
.tree li.plain {
  padding-left: 10px;
}
.tree li.level-1 {
  padding-left: 7px;
}
.tree li.level-2 {
  padding-left: 14px;
}
.closed::before, .open::before {
  width: 9px;
  font-family: "DejaVu Sans", sans-serif;
  font-size: 8px;
  color: #444;
}
.closed::before {
  content: "▸";
}
.open::before {
  content: "▾";
}
.dot {
  width: 7px;
  height: 7px;
  margin-right: 5px;
  border-radius: 50%;
}
.dot-green {
  background: #1fc838;
}
.dot-red {
  background: #b00a14;
}
.scrollbar {
  display: flex;
  flex-direction: column;
  align-items: center;
  width: 10px;
  border-left: 1px solid #ccc;
  background: #e6e6e6;
  font: 6px/10px "DejaVu Sans", sans-serif;
}
.scrollbar .thumb {
  width: 100%;
  height: 65px;
  margin-bottom: auto;
  border-bottom: 1px solid #bbb;
  background: #fbfbfb;
}
.splitter {
  width: 22px;
  margin: 5px auto;
  border-top: 2px dotted #777;
}
.module-name {
  font-size: 10px;
  color: #999;
}
.module-name b {
  font-weight: normal;
  color: #b4102c;
}
.module {
  display: flex;
  flex-direction: column;
  gap: 4px;
  margin-top: 5px;
  padding: 6px 6px 5px 5px;
  border: 1px solid #bbb;
}
.pair {
  display: grid;
  grid-template-columns: 1fr 1fr;
  gap: 3px 4px;
}
.module .check {
  margin-top: 7px;
}
.file {
  display: grid;
  grid-template-columns: 16fr 9fr;
  gap: 4px;
}
.module .muted {
  color: #888;
  background: #e2e2e2;
}
.actions {
  margin-top: 60px;
}
.logo {
  display: flex;
  flex-direction: column;
  align-items: center;
  margin-top: 26px;
  font-family: "Open Sans", sans-serif;
  font-weight: 600;
  font-size: 22px;
  line-height: 24px;
  color: #808285;
}
.logo strong {
  font-size: 35px;
  line-height: 32px;
  color: #d0102e;
}
.logo b {
  color: #d0102e;
}
.grip {
  display: flex;
  align-items: center;
  width: 8px;
  border-left: 1px solid #ccc;
}
.grip::before {
  content: "";
  height: 20px;
  border-left: 2px dotted #777;
}
.grip-right {
  justify-content: flex-end;
  border-left: 0;
  border-right: 1px solid #ccc;
}

/* center */
.center {
  flex: 1;
  display: flex;
  flex-direction: column;
  min-width: 0;
  padding: 6px 0;
}
.view-tabs {
  display: flex;
  align-items: flex-end;
}
.view-tabs > * {
  display: flex;
  align-items: center;
  gap: 4px;
  height: 15px;
  padding: 0 7px;
  border: 1px solid #ccc;
  border-bottom: 0;
  background: #e8e8e8;
}
.view-tabs .current {
  height: 17px;
  background: #fff;
}
.tab-page {
  position: relative;
  display: flex;
  gap: 5px;
  height: 86px;
  padding: 9px 6px 8px 7px;
  border: 1px solid #bbb;
  background: #fafafa;
}
fieldset {
  flex: 1;
  display: grid;
  align-content: start;
  align-items: center;
  min-width: 0;
  margin: 0;
  padding: 6px;
  border: 1px solid #ddd;
  background: #f7f7f7;
}
.coloring {
  grid-template-columns: 44px 1fr 60px;
  gap: 3px 5px;
}
.tab-page .map-button {
  background:
    linear-gradient(45deg, transparent 50%, #444 50%) right 3px bottom 1px / 2px 2px no-repeat,
    linear-gradient(-45deg, transparent 50%, #444 50%) right 1px bottom 1px / 2px 2px no-repeat,
    linear-gradient(#fff, #ededed);
}
.threshold {
  grid-template-columns: 77px 1fr 1fr 1fr;
  gap: 20px 4px;
  padding-top: 10px;
}
.ids-label {
  grid-column: span 2;
}
.threshold select {
  grid-column: span 2;
}
.range {
  display: grid;
}
.range input {
  grid-area: 1 / 1;
  width: 100%;
  height: 8px;
  appearance: none;
  background: linear-gradient(#bbb, #bbb) center / 80% 3px no-repeat;
}
.range input::-webkit-slider-thumb {
  width: 9px;
  height: 8px;
  border: 1px solid #aaa;
  border-radius: 2px;
  appearance: none;
  background: #fff;
}
.range input + input {
  background: none;
}
.gear {
  position: absolute;
  right: 0;
  bottom: 0;
}
.gear svg {
  width: 11px;
  height: 11px;
}
.viewer {
  position: relative;
  flex: 1;
  display: flex;
  justify-content: center;
  min-height: 0;
  background: #bfbfbf;
  font-family: "DejaVu Sans", sans-serif;
  font-size: 9px;
  line-height: 10px;
}
.slice {
  height: 100%;
}
.materials {
  position: absolute;
  left: 0;
  top: 0;
  padding: 1px;
  border: 1px solid #444;
}
.materials li {
  display: flex;
  align-items: center;
  gap: 4px;
}
.swatch {
  width: 8px;
  height: 8px;
  border: 1px solid #777;
}
.materials .swatch {
  width: 6px;
  height: 6px;
  border-color: #222;
}
.white { background: #fff; }
.black { background: #000; }
.red { background: #d00a18; }
.green { background: #38ee38; }
.blue { background: #0000c8; }
.purple { background: #8a10d0; }
.cyan { background: #38eee8; }
.velocity {
  position: absolute;
  right: 0;
  top: 50px;
  width: 99px;
  padding: 3px 1px 0 2px;
  border: 1px solid #444;
}
.scale {
  display: flex;
  margin-top: 4px;
}
.scale ul {
  display: flex;
  flex: 1;
  flex-direction: column;
  justify-content: space-between;
  height: 171px;
}
.scale li {
  display: flex;
  align-items: center;
}
.scale li::after {
  content: "";
  width: 2px;
  height: 1px;
  margin-left: auto;
  background: #222;
}
.scale li:first-child {
  margin-bottom: 3px;
}
.scale li span {
  width: 34px;
  text-align: right;
}
.color-bar {
  width: 24px;
  height: 161px;
  margin-top: 5px;
  background: linear-gradient(#e81000, #f07800 12%, #ffff00 24%, #78ff00 35%, #10f000 47%, #10f890 63%, #10ffff 77%, #0078f0 89%, #0000f0);
}
.velocity dl {
  margin: 5px 0 10px;
}
.velocity dl:last-child {
  margin-bottom: 0;
}
.velocity dd {
  display: flex;
}
.velocity dd span {
  width: 36px;
}
.viewer-footer {
  display: flex;
  align-items: center;
  height: 54px;
  padding-left: 2px;
  background: #000;
  color: #ddd;
  font-family: "DejaVu Sans", sans-serif;
  font-size: 9px;
  line-height: 10px;
}
.viewer-footer p {
  width: 213px;
}
.brand {
  font-family: "Open Sans", sans-serif;
  font-size: 35px;
  line-height: 54px;
  color: #999;
}
.brand b {
  font-weight: normal;
  color: #c8142e;
}
.brand small {
  font-size: 28px;
}
.ruler {
  width: 200px;
  height: 30px;
  margin-left: auto;
  padding: 3px 12px;
  border: 2px solid #ddd;
  text-align: center;
}
.ruler-bar {
  display: flex;
  height: 9px;
  margin-bottom: 2px;
  padding: 2px 0;
  background: #fff;
}
.ruler-bar i {
  flex: 1;
}
.ruler-bar i:nth-child(even) {
  background: #111;
}
.axes {
  width: 48px;
  height: 46px;
  margin: 0 2px 0 4px;
  fill: #ddd;
}

/* right dock */
.right-dock {
  width: 261px;
  padding: 0 9px 0 6px;
}
.right-dock .dock-header {
  margin: 0 -6px 0 -3px;
}
.apply {
  display: flex;
  justify-content: space-between;
  align-items: center;
  height: 21px;
}
.apply button {
  width: 121px;
}
.colors {
  height: 469px;
  padding: 6px;
  border: 1px solid #bbb;
}
.colors .preset {
  width: 100%;
  margin-bottom: 3px;
}
.color-row {
  display: grid;
  grid-template-columns: 83px 70px 1fr;
  align-items: center;
  gap: 5px;
  white-space: nowrap;
}
.color-row button {
  gap: 3px;
  height: 16px;
}
.ruled {
  height: 26px;
  border-top: 2px solid #909090;
}
.materials-list {
  display: flex;
  flex-direction: column;
  gap: 4px;
  padding-top: 4px;
  border-top: 2px solid #909090;
}
.dock-tools {
  display: flex;
  gap: 6px;
  margin-top: 21px;
}
.dock-tools svg {
  width: 12px;
  height: 12px;
}
.side-tabs {
  display: flex;
  flex-direction: column;
  gap: 2px;
  width: 16px;
  padding: 4px 1px 0;
}
.side-tabs button {
  display: flex;
  align-items: center;
  gap: 2px;
  width: 14px;
  min-height: 42px;
  padding: 2px 0 1px;
  border: 1px solid #ccc;
  background: #f6f6f6;
  writing-mode: vertical-rl;
}
.side-tabs i {
  writing-mode: horizontal-tb;
  font-size: 10px;
  line-height: 8px;
}
.side-tabs .current {
  background: #d8d8d8;
}
.side-tabs .apart {
  margin-top: 5px;
}
.bottom-bar {
  position: relative;
  display: flex;
  justify-content: center;
  gap: 2px;
  height: 20px;
  padding: 3px 0;
  background: #f3f3f3;
}
.bottom-bar button {
  display: flex;
  align-items: center;
  gap: 3px;
  padding: 0 5px;
  border: 1px solid #c4c4c4;
  background: #fafafa;
}
.bottom-bar i {
  writing-mode: vertical-rl;
  font-size: 10px;
  line-height: 8px;
}
.share-strip {
  position: absolute;
  left: 42%;
  bottom: 0;
  width: 204px;
  height: 2px;
  background: #333;
}

/* windows taskbar */
.taskbar {
  display: flex;
  height: 27px;
  background: #202020;
  color: #fff;
  font-family: "Open Sans", sans-serif;
}
.taskbar button {
  display: flex;
  align-items: center;
  justify-content: center;
  width: 27px;
  margin-right: 6px;
  border-bottom: 2px solid transparent;
}
.taskbar button:nth-child(-n+3) {
  margin-right: 5px;
}
.taskbar button:first-child {
  margin-left: 1px;
}
.taskbar svg {
  width: 16px;
  height: 16px;
}
.taskbar .running {
  border-color: #aaa;
}
.taskbar .active {
  background: #383838;
}
.clock {
  margin-left: auto;
  padding: 2px 2px 0 0;
  font-size: 7px;
  text-align: right;
}
```
